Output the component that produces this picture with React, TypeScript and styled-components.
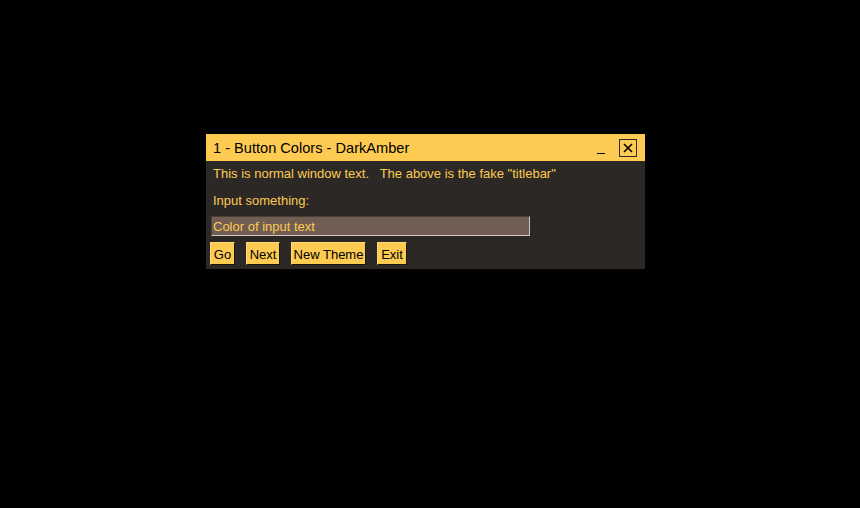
import React from 'react'
import styled, { createGlobalStyle } from 'styled-components'

const GlobalStyle = createGlobalStyle`
    html, body {
        margin: 0;
        padding: 0;
        background: #000000;
        height: 100%;
    }
    #root {
        min-height: 100vh;
    }
`

const Screen = styled.div`
    min-height: 100vh;
    background: #000000;
    padding: 134px 0 0 206px;
    box-sizing: border-box;
`

const Window = styled.div`
    width: 439px;
    background: #2c2825;
    display: flex;
    flex-direction: column;
    font-family: "Liberation Sans", Arial, sans-serif;
`

const TitleBar = styled.div`
    height: 27px;
    background: #fdcb52;
    display: flex;
    align-items: center;
    padding: 0 8px 0 7px;
    box-sizing: border-box;
`

const TitleText = styled.div`
    flex: 1;
    font-size: 14.6px;
    color: #000000;
`

const TitleControls = styled.div`
    display: flex;
    align-items: center;
    gap: 14px;
`

const MinimizeMark = styled.span`
    display: block;
    width: 8px;
    height: 1px;
    background: #000000;
    margin-top: 12px;
`

const CloseBox = styled.div`
    width: 16px;
    height: 16px;
    border: 1px solid #2c2825;
    display: flex;
    align-items: center;
    justify-content: center;
`

const Body = styled.div`
    padding: 4px 4px 4px 4px;
    display: flex;
    flex-direction: column;
`

const Label = styled.div<{ $gap?: number }>`
    height: 18px;
    line-height: 18px;
    margin: ${(p) => p.$gap ?? 0}px 0 0 3px;
    font-size: 13px;
    color: #fdcb52;
    white-space: pre;
`

const TextInput = styled.input`
    width: 319px;
    height: 20px;
    margin: 6px 0 0 1px;
    padding: 0 1px;
    box-sizing: border-box;
    background: #705e52;
    color: #fdcb52;
    font-family: "Liberation Sans", Arial, sans-serif;
    font-size: 13px;
    border-style: solid;
    border-width: 1px;
    border-color: #4a3f37 #cfc7c0 #cfc7c0 #4a3f37;
    outline: none;
`

const ButtonRow = styled.div`
    display: flex;
    gap: 11px;
    margin-top: 6px;
`

const Button = styled.button<{ $w: number }>`
    width: ${(p) => p.$w}px;
    height: 23px;
    padding: 1px 0 0 0;
    box-sizing: border-box;
    background: #fdcb52;
    color: #000000;
    font-family: "Liberation Sans", Arial, sans-serif;
    font-size: 13px;
    border-style: solid;
    border-width: 1px;
    border-color: #fdd979 #1a1510 #1a1510 #fdd979;
    cursor: pointer;
`

const App = () => {
    const buttons = [
        { label: 'Go', width: 25 },
        { label: 'Next', width: 34 },
        { label: 'New Theme', width: 75 },
        { label: 'Exit', width: 30 },
    ]
    return (
        <>
            <GlobalStyle />
            <Screen>
                <Window>
                    <TitleBar>
                        <TitleText>1 - Button Colors - DarkAmber</TitleText>
                        <TitleControls>
                            <MinimizeMark />
                            <CloseBox>
                                <svg width="10" height="10" viewBox="0 0 10 10">
                                    <path d="M1 1 L9 9 M9 1 L1 9" stroke="#000" strokeWidth="1.6" />
                                </svg>
                            </CloseBox>
                        </TitleControls>
                    </TitleBar>
                    <Body>
                        <Label>{'This is normal window text.   The above is the fake "titlebar"'}</Label>
                        <Label $gap={9}>Input something:</Label>
                        <TextInput defaultValue="Color of input text" />
                        <ButtonRow>
                            {buttons.map((b) => (
                                <Button key={b.label} $w={b.width}>{b.label}</Button>
                            ))}
                        </ButtonRow>
                    </Body>
                </Window>
            </Screen>
        </>
    )
}

export default App
